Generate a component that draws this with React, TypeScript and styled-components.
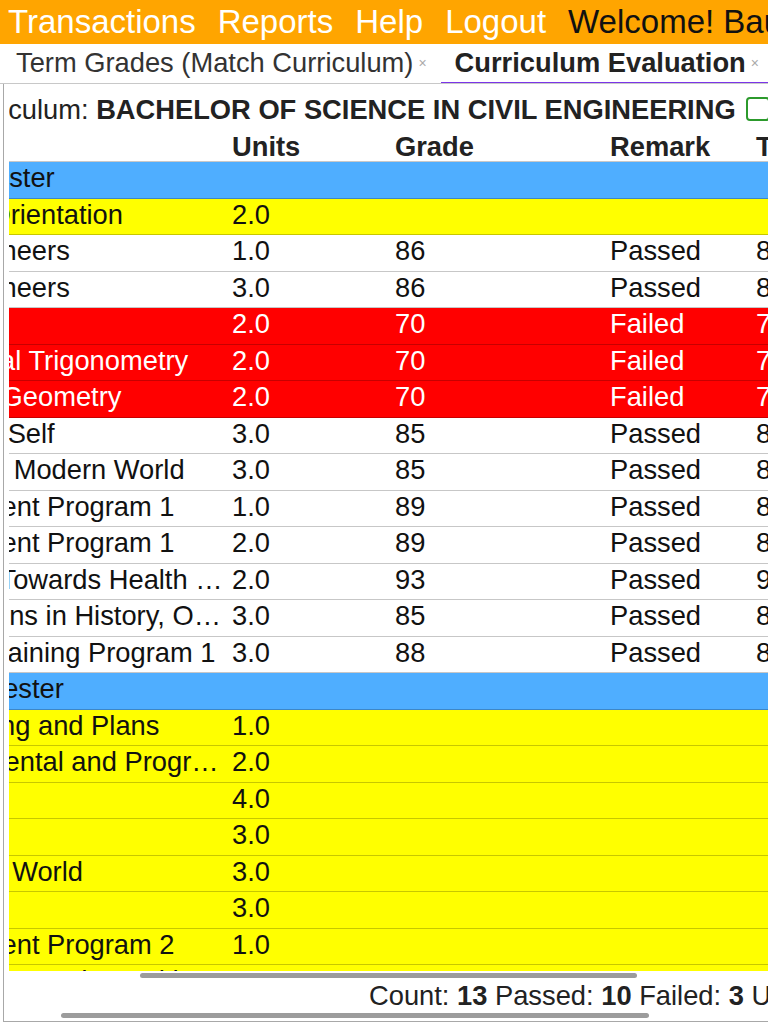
import React, {useLayoutEffect, useRef} from 'react';
import styled, {createGlobalStyle, css} from 'styled-components';

const GlobalStyle = createGlobalStyle`
  html, body {
    margin: 0;
    padding: 0;
    background: #fff;
  }
  body {
    font-family: 'Liberation Sans', Arial, Helvetica, sans-serif;
    color: #111;
  }
  #root {
    width: 768px;
    height: 1024px;
    overflow: hidden;
  }
`;

type Tone = 'section' | 'pending' | 'passed' | 'failed';

type Course = {
  tone: Tone;
  title: string;
  units?: string;
  grade?: string;
  remark?: string;
};

const rows: Course[] = [
  {tone: 'section', title: 'First Year 1st Semester'},
  {tone: 'pending', title: 'Civil Engineering Orientation', units: '2.0'},
  {tone: 'passed', title: 'Chemistry for Engineers', units: '1.0', grade: '86', remark: 'Passed'},
  {tone: 'passed', title: 'Chemistry for Engineers', units: '3.0', grade: '86', remark: 'Passed'},
  {tone: 'failed', title: 'College Algebra', units: '2.0', grade: '70', remark: 'Failed'},
  {tone: 'failed', title: 'Plane and Spherical Trigonometry', units: '2.0', grade: '70', remark: 'Failed'},
  {tone: 'failed', title: 'Analytic and Solid Geometry', units: '2.0', grade: '70', remark: 'Failed'},
  {tone: 'passed', title: 'Understanding the Self', units: '3.0', grade: '85', remark: 'Passed'},
  {tone: 'passed', title: 'Mathematics in the Modern World', units: '3.0', grade: '85', remark: 'Passed'},
  {tone: 'passed', title: 'Student Development Program 1', units: '1.0', grade: '89', remark: 'Passed'},
  {tone: 'passed', title: 'Student Development Program 1', units: '2.0', grade: '89', remark: 'Passed'},
  {tone: 'passed', title: 'Physical Activities Towards Health and Fitness 1', units: '2.0', grade: '93', remark: 'Passed'},
  {tone: 'passed', title: 'Philippine Reflections in History, Origins and Identity', units: '3.0', grade: '85', remark: 'Passed'},
  {tone: 'passed', title: 'National Service Training Program 1', units: '3.0', grade: '88', remark: 'Passed'},
  {tone: 'section', title: 'First Year 2nd Semester'},
  {tone: 'pending', title: 'Engineering Drawing and Plans', units: '1.0'},
  {tone: 'pending', title: 'Computer Fundamental and Programming', units: '2.0'},
  {tone: 'pending', title: 'Calculus 1', units: '4.0'},
  {tone: 'pending', title: 'Art Appreciation', units: '3.0'},
  {tone: 'pending', title: 'The Contemporary World', units: '3.0'},
  {tone: 'pending', title: 'Ethics', units: '3.0'},
  {tone: 'pending', title: 'Student Development Program 2', units: '1.0'},
  {tone: 'pending', title: 'Physical Activities Towards Health and Fitness 2', units: '2.0'},
];

const TopBar = styled.nav`
  display: flex;
  gap: 22px;
  height: 44px;
  padding-left: 8px;
  background: #ffa500;
  font-size: 33px;
  line-height: 44px;
  white-space: nowrap;
  overflow: hidden;
`;

const MenuItem = styled.a<{$dark?: boolean}>`
  color: ${(p) => (p.$dark ? '#111' : '#fff')};
  text-decoration: none;
`;

const TabBar = styled.div`
  display: flex;
  height: 40px;
  box-sizing: border-box;
  border-bottom: 1px solid #c8c8c8;
  font-size: 27.3px;
  white-space: nowrap;
  overflow: hidden;
`;

const Tab = styled.div<{$active?: boolean}>`
  display: flex;
  align-items: center;
  height: 40px;
  box-sizing: border-box;
  margin-bottom: -1px;
  padding: 0 14px;
  line-height: 38px;
  border-bottom: 2px solid ${(p) => (p.$active ? '#7b35e8' : 'transparent')};
  color: ${(p) => (p.$active ? '#222' : '#333')};
  font-weight: ${(p) => (p.$active ? 700 : 400)};

  &:first-child {
    padding-left: 16px;
  }
`;

const TabClose = styled.span`
  margin-left: 5px;
  font-size: 14px;
  font-weight: 400;
  color: #aaa;
`;

const Panel = styled.section`
  position: relative;
  height: 938px;
  margin-left: 3px;
  padding-left: 5px;
  box-sizing: border-box;
  border-left: 1px solid #a8a8a8;
  border-bottom: 1px solid #a8a8a8;
`;

const ScrollArea = styled.div`
  height: 100%;
  overflow: hidden;
`;

const Sheet = styled.div`
  width: 982px;
  box-sizing: border-box;
  padding: 11px 8px 0;
  font-size: 27.3px;
`;

const HeaderLine = styled.div`
  height: 30px;
  margin-bottom: 3px;
  line-height: 30px;
  white-space: nowrap;
  color: #222;

  b {
    font-weight: 700;
  }
`;

const GreenBox = styled.span`
  display: inline-block;
  width: 20px;
  height: 20px;
  margin-left: 10px;
  vertical-align: -2px;
  border: 2px solid #2c9a2c;
  border-radius: 4px;
`;

const TableFrame = styled.div`
  position: relative;
`;

const TableScroll = styled.div`
  height: 843px;
  overflow: hidden;
`;

const Table = styled.div`
  width: 1179px;
`;

const columns = css`
  display: grid;
  grid-template-columns: 455px 163px 215px 146px 200px;
  box-sizing: border-box;
`;

const HeadRow = styled.div`
  ${columns};
  height: 34px;
  padding-top: 3px;
  border-bottom: 1px solid #c8c8c8;
  font-weight: 700;
  color: #222;
`;

const toneBg: Record<Tone, string> = {
  section: '#4faeff',
  pending: '#ffff00',
  passed: '#ffffff',
  failed: '#ff0000',
};

const Row = styled.div<{$tone: Tone}>`
  ${columns};
  height: 36.5px;
  border-bottom: 1px solid rgba(0, 0, 0, 0.22);
  background: ${(p) => toneBg[p.$tone]};
  color: ${(p) => (p.$tone === 'failed' ? '#fff' : '#111')};
`;

const Cell = styled.div`
  padding: 0 8px;
  line-height: 31px;
  white-space: nowrap;
  overflow: hidden;
  text-overflow: ellipsis;
`;

const TitleCell = styled(Cell)`
  padding-right: 0;
`;

const SectionCell = styled.div`
  grid-column: 1 / -1;
  padding-left: 2px;
  line-height: 31px;
  white-space: nowrap;
`;

const Track = styled.div`
  position: relative;
  height: 12px;
`;

const Thumb = styled.div<{$left: number; $width: number}>`
  position: absolute;
  top: 2px;
  left: ${(p) => p.$left}px;
  width: ${(p) => p.$width}px;
  height: 5px;
  border-radius: 3px;
  background: #9c9c9c;
`;

const OuterThumb = styled(Thumb)`
  top: auto;
  bottom: 3px;
`;

const Summary = styled.div`
  height: 26px;
  padding-left: 420px;
  line-height: 26px;
  white-space: nowrap;
  color: #222;

  b {
    font-weight: 700;
  }
`;

const App = () => {
  const outerRef = useRef<HTMLDivElement>(null);
  const tableRef = useRef<HTMLDivElement>(null);

  // the page is shown scrolled sideways, as in the captured view
  useLayoutEffect(() => {
    if (outerRef.current) outerRef.current.scrollLeft = 68;
    if (tableRef.current) tableRef.current.scrollLeft = 180;
  }, []);

  return (
    <>
      <GlobalStyle />
      <TopBar>
        <MenuItem>Transactions</MenuItem>
        <MenuItem>Reports</MenuItem>
        <MenuItem>Help</MenuItem>
        <MenuItem>Logout</MenuItem>
        <MenuItem $dark>Welcome! Bautista, Juan</MenuItem>
      </TopBar>
      <TabBar>
        <Tab>
          Term Grades (Match Curriculum)
          <TabClose>×</TabClose>
        </Tab>
        <Tab $active>
          Curriculum Evaluation
          <TabClose>×</TabClose>
        </Tab>
      </TabBar>
      <Panel>
        <ScrollArea ref={outerRef}>
          <Sheet>
            <HeaderLine>
              Curriculum: <b>BACHELOR OF SCIENCE IN CIVIL ENGINEERING</b>
              <GreenBox />
            </HeaderLine>
            <TableFrame>
              <TableScroll ref={tableRef}>
                <Table>
                  <HeadRow>
                    <Cell>Description</Cell>
                    <Cell>Units</Cell>
                    <Cell>Grade</Cell>
                    <Cell>Remark</Cell>
                    <Cell>Trans. Grade</Cell>
                  </HeadRow>
                  {rows.map((row, i) =>
                    row.tone === 'section' ? (
                      <Row key={i} $tone="section">
                        <SectionCell>{row.title}</SectionCell>
                      </Row>
                    ) : (
                      <Row key={i} $tone={row.tone}>
                        <TitleCell>{row.title}</TitleCell>
                        <Cell>{row.units}</Cell>
                        <Cell>{row.grade}</Cell>
                        <Cell>{row.remark}</Cell>
                        <Cell>{row.grade}</Cell>
                      </Row>
                    )
                  )}
                </Table>
              </TableScroll>
              <Track>
                <Thumb $left={191} $width={497} />
              </Track>
            </TableFrame>
            <Summary>
              Count: <b>13</b> Passed: <b>10</b> Failed: <b>3</b> Units: <b>29.0</b>
            </Summary>
          </Sheet>
        </ScrollArea>
        <OuterThumb $left={57} $width={588} />
      </Panel>
    </>
  );
};

export default App;
